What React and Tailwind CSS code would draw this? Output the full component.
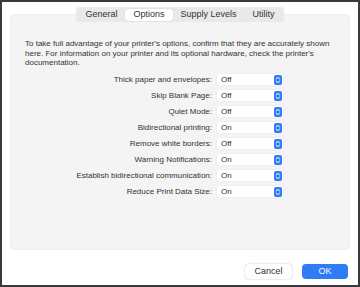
import React from "react";

const rows = [
  ["Thick paper and envelopes:", "Off"],
  ["Skip Blank Page:", "Off"],
  ["Quiet Mode:", "Off"],
  ["Bidirectional printing:", "On"],
  ["Remove white borders:", "Off"],
  ["Warning Notifications:", "On"],
  ["Establish bidirectional communication:", "On"],
  ["Reduce Print Data Size:", "On"],
];

function Stepper() {
  return (
    <div className="w-[8px] h-[10px] rounded-[2px] bg-[#2f7cf6] flex items-center justify-center">
      <svg width="6" height="8" viewBox="0 0 6 8">
        <path d="M1.2 3 L3 1.3 L4.8 3" fill="none" stroke="white" strokeWidth="1" strokeLinecap="round" strokeLinejoin="round" />
        <path d="M1.2 5 L3 6.7 L4.8 5" fill="none" stroke="white" strokeWidth="1" strokeLinecap="round" strokeLinejoin="round" />
      </svg>
    </div>
  );
}

export default function App() {
  return (
    <div
      className="w-[360px] h-[287px] border-2 border-[#3a3a3a] bg-white flex flex-col text-[#2b2b2b]"
      style={{ fontFamily: "'Liberation Sans', Arial, sans-serif" }}
    >
      <div className="flex justify-center pt-[5px] relative z-10">
        <div className="flex items-center h-[15px] bg-[#e9e9e9] rounded-[4px] px-[1px] text-[9px] text-[#333]">
          <div className="px-[8px]">General</div>
          <div className="px-[8px] bg-white rounded-[3px] h-[12px] flex items-center shadow-[0_0_1px_rgba(0,0,0,0.25)]">Options</div>
          <div className="px-[8px]">Supply Levels</div>
          <div className="px-[8px]">Utility</div>
        </div>
      </div>
      <div className="mx-[8px] -mt-[8px] h-[236px] bg-[#f4f4f4] rounded-[5px] border border-[#ececec] px-[14px] pt-[24px]">
        <p className="text-[8px] leading-[9.5px] text-[#333]">
          To take full advantage of your printer's options, confirm that they are accurately shown here. For information on your printer and its optional hardware, check the printer's documentation.
        </p>
        <div className="mt-[4px] flex flex-col">
          {rows.map(([label, val]) => (
            <div key={label} className="h-[16px] flex items-center">
              <div className="w-[187px] text-right text-[8px] text-[#333]">{label}</div>
              <div className="ml-[5px] w-[66px] h-[11px] bg-white rounded-[2px] shadow-[0_0_1px_rgba(0,0,0,0.2)] flex items-center justify-between pl-[4px] pr-[1px]">
                <span className="text-[8px] text-[#333]">{val}</span>
                <Stepper />
              </div>
            </div>
          ))}
        </div>
      </div>
      <div className="flex justify-end gap-[10px] mt-[14px] mr-[10px]">
        <div className="w-[47px] h-[15px] bg-white rounded-[4px] shadow-[0_0_1.5px_rgba(0,0,0,0.35)] flex items-center justify-center text-[9px] text-[#333]">Cancel</div>
        <div className="w-[46px] h-[15px] bg-[#2f7cf6] rounded-[4px] flex items-center justify-center text-[9px] text-white font-medium">OK</div>
      </div>
    </div>
  );
}
